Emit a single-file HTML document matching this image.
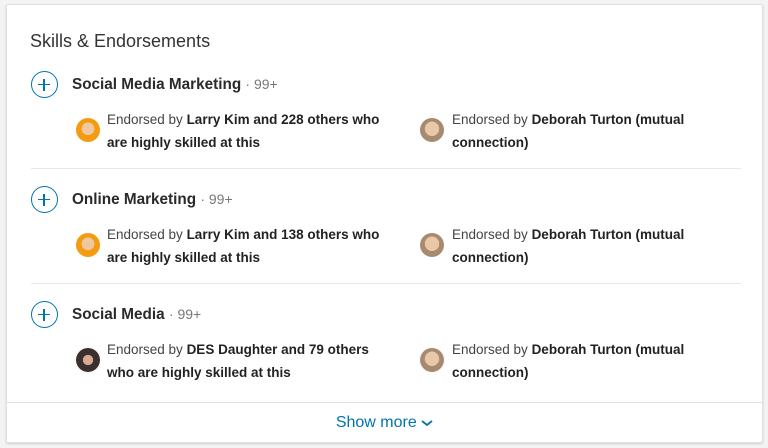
<!DOCTYPE html>
<html><head><style>
body{margin:0;width:768px;height:448px;background:#f3f3f3;font-family:"Liberation Sans",sans-serif;overflow:hidden;position:relative}
.card{position:absolute;left:6px;top:4px;width:755px;height:437px;background:#fff;border:1px solid #e0e0e0;border-radius:2px;box-shadow:0 1px 2px rgba(0,0,0,.15)}
.title{position:absolute;left:23px;top:26px;font-size:18px;color:#333}
.sec{position:absolute;left:0;width:755px}
.plus{position:absolute;left:24px;width:27px;height:27px;border:1.5px solid #0073b1;border-radius:50%;box-sizing:border-box}
.plus:before{content:"";position:absolute;left:6px;top:11.5px;width:12px;height:1.6px;background:#0073b1}
.plus:after{content:"";position:absolute;left:11.2px;top:6.5px;width:1.6px;height:12px;background:#0073b1}
.name{position:absolute;left:65px;font-size:15.3px;font-weight:bold;color:#2a2a2a}
.name span{font-weight:normal;color:#777;font-size:14px}
.end{position:absolute;font-size:13.5px;line-height:23px;color:#444;width:290px}
.end b{color:#222}
.av{position:absolute;width:24px;height:24px;border-radius:50%}
.sep{position:absolute;left:24px;width:710px;height:1px;background:#e6e9ec}
</style></head><body>
<div class="card">
<div class="title">Skills &amp; Endorsements</div>

<div class="sec" style="top:66px">
<div class="plus" style="top:0"></div>
<div class="name" style="top:5px">Social Media Marketing <span>· 99+</span></div>
<div class="av" style="left:69px;top:47px;background:radial-gradient(circle at 50% 45%,#f0c8a0 0 35%,#f39c12 36%)"></div>
<div class="end" style="left:100px;top:37px">Endorsed by <b>Larry Kim and 228 others who are highly skilled at this</b></div>
<div class="av" style="left:413px;top:47px;background:radial-gradient(circle at 50% 45%,#e8c8a8 0 40%,#a88a70 41%)"></div>
<div class="end" style="left:445px;top:37px">Endorsed by <b>Deborah Turton (mutual connection)</b></div>
</div>
<div class="sep" style="top:163px"></div>

<div class="sec" style="top:181px">
<div class="plus" style="top:0"></div>
<div class="name" style="top:5px">Online Marketing <span>· 99+</span></div>
<div class="av" style="left:69px;top:47px;background:radial-gradient(circle at 50% 45%,#f0c8a0 0 35%,#f39c12 36%)"></div>
<div class="end" style="left:100px;top:37px">Endorsed by <b>Larry Kim and 138 others who are highly skilled at this</b></div>
<div class="av" style="left:413px;top:47px;background:radial-gradient(circle at 50% 45%,#e8c8a8 0 40%,#a88a70 41%)"></div>
<div class="end" style="left:445px;top:37px">Endorsed by <b>Deborah Turton (mutual connection)</b></div>
</div>
<div class="sep" style="top:278px"></div>

<div class="sec" style="top:296px">
<div class="plus" style="top:0"></div>
<div class="name" style="top:5px">Social Media <span>· 99+</span></div>
<div class="av" style="left:69px;top:47px;background:radial-gradient(circle at 50% 50%,#d8a890 0 30%,#3a3030 31% 70%,#4a7a3a 71%)"></div>
<div class="end" style="left:100px;top:37px">Endorsed by <b>DES Daughter and 79 others who are highly skilled at this</b></div>
<div class="av" style="left:413px;top:47px;background:radial-gradient(circle at 50% 45%,#e8c8a8 0 40%,#a88a70 41%)"></div>
<div class="end" style="left:445px;top:37px">Endorsed by <b>Deborah Turton (mutual connection)</b></div>
</div>

<div style="position:absolute;left:0;top:397px;width:755px;height:1px;background:#e0e0e0"></div>
<div style="position:absolute;left:0;top:409px;width:755px;text-align:center;font-size:16px;color:#0073b1">Show more <svg width="12" height="8" viewBox="0 0 12 8" style="vertical-align:middle"><path d="M1 2l5 4 5-4" fill="none" stroke="#0073b1" stroke-width="1.8"/></svg></div>
</div>
</body></html>
